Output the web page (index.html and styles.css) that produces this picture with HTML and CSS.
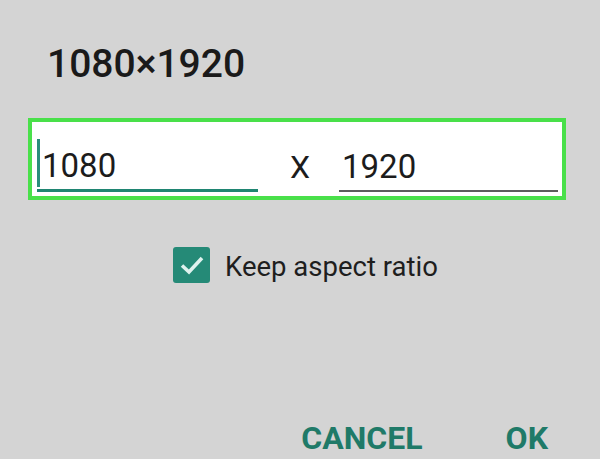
FILE: index.html
```html
<!DOCTYPE html>
<html>
<head>
<meta charset="utf-8">
<title>Resolution</title>
<link rel="stylesheet" href="styles.css">
</head>
<body>
<div class="dialog">
	<h1 class="title">1080×1920</h1>
	<div class="size-box">
		<div class="field field-active">
			<span class="caret"></span>
			<span class="val">1080</span>
		</div>
		<span class="times">X</span>
		<div class="field">
			<span class="val">1920</span>
		</div>
	</div>
	<label class="keep">
		<span class="check">
			<svg width="26" height="22" viewBox="0 0 26 22"><path d="M3 11.5 L10 18 L23 4" fill="none" stroke="#dff2ee" stroke-width="3.6"/></svg>
		</span>
		<span class="keep-txt">Keep aspect ratio</span>
	</label>
	<div class="buttons">
		<a href="javascript:;" class="btn">CANCEL</a>
		<a href="javascript:;" class="btn">OK</a>
	</div>
</div>
</body>
</html>
```

FILE: styles.css
```css
* {padding:0; margin:0;}
body {background:#d4d4d4; font-family:Roboto, "Noto Sans", sans-serif; color:#1c1c1c; width:600px; height:459px; overflow:hidden;}
.dialog {padding:41px 34px 0 28px;}

.title {font-size:39px; font-weight:500; line-height:46px; padding-left:19px; color:#1a1a1a;}

.size-box {margin-top:31px; height:70px; border:4px solid #49e04a; background:#fff; display:flex; align-items:flex-end; padding:0 4px 4px 5px;}
.field {position:relative; height:46px; border-bottom:2px solid #5c5c5c; display:flex; align-items:center; width:221px;}
.field-active {border-bottom:3px solid #1f8572; width:223px;}
.caret {position:absolute; left:0; top:-4px; width:3px; height:48px; background:#2a8e7c;}
.val {font-size:33px; line-height:44px; padding-left:5px; color:#1c1c1c;}
.field:last-child .val {padding-left:3px;}
.times {font-size:32px; line-height:46px; margin:0 29px 0 32px; padding-bottom:2px;}

.keep {display:flex; align-items:center; margin:47px 0 0 145px;}
.check {width:37px; height:36px; border-radius:3px; background:#258a77; display:flex; align-items:center; justify-content:center;}
.keep-txt {font-size:27.5px; margin-left:15px; color:#1e1e1e; padding-top:2px;}

.buttons {display:flex; justify-content:flex-end; margin-top:136px; padding-right:18px;}
.btn {font-size:32px; font-weight:700; color:#1f7a68; text-decoration:none;}
.btn + .btn {margin-left:83px;}
```
